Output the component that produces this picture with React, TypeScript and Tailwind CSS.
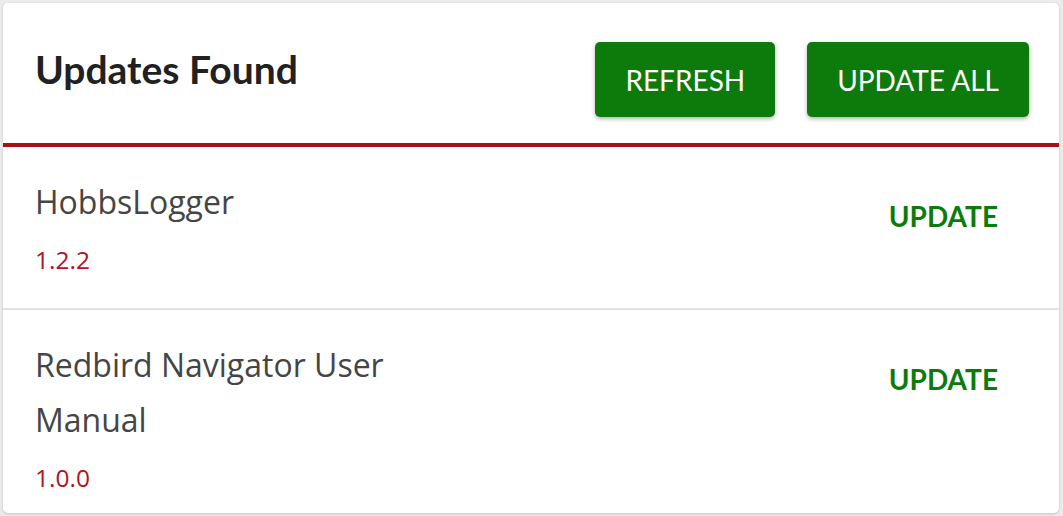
import React from "react";

const items = [
  { name: "HobbsLogger", version: "1.2.2" },
  { name: "Redbird Navigator User Manual", version: "1.0.0" },
];

export default function App() {
  return (
    <div className="w-[1063px] h-[516px] overflow-hidden bg-[#ececec] pt-[3px] pl-[3px] pr-[4px] pb-[3px]">
      <div className="bg-white rounded-[5px] shadow-[0_1px_3px_rgba(0,0,0,0.18)] h-[510px] overflow-hidden">
        <div className="flex items-start justify-between h-[140px] pl-[32px] pr-[30px]">
          <h1 className="mt-[43px] font-['Lato',sans-serif] font-bold text-[39px] leading-[47px] text-[#212121]">
            Updates Found
          </h1>
          <div className="flex gap-[32px] mt-[39px]">
            <button className="h-[75px] px-[30px] rounded-[5px] bg-[#0d7b0b] text-white font-['Lato',sans-serif] text-[28px] shadow-[0_2px_4px_rgba(0,0,0,0.3)]">
              REFRESH
            </button>
            <button className="h-[75px] px-[30px] rounded-[5px] bg-[#0d7b0b] text-white font-['Lato',sans-serif] text-[28px] shadow-[0_2px_4px_rgba(0,0,0,0.3)]">
              UPDATE ALL
            </button>
          </div>
        </div>
        <div className="h-[3.5px] bg-[#a8111a]" />
        {items.map((it, i) => (
          <div
            key={it.name}
            className={`flex items-start justify-between pl-[32px] pr-[61px] pt-[27px] pb-[30px] ${i === 0 ? "border-b-2 border-[#e2e2e2]" : ""}`}
          >
            <div className="w-[400px]">
              <div className="font-['Open_Sans',sans-serif] text-[32px] leading-[55px] text-[#454545]">
                {it.name}
              </div>
              <div className="mt-[13px] font-['Open_Sans',sans-serif] text-[24.5px] leading-[36px] text-[#b0141c]">
                {it.version}
              </div>
            </div>
            <div className="mt-[25px] font-['Lato',sans-serif] font-bold text-[28px] leading-[34px] text-[#0d7b0b]">
              UPDATE
            </div>
          </div>
        ))}
      </div>
    </div>
  );
}
